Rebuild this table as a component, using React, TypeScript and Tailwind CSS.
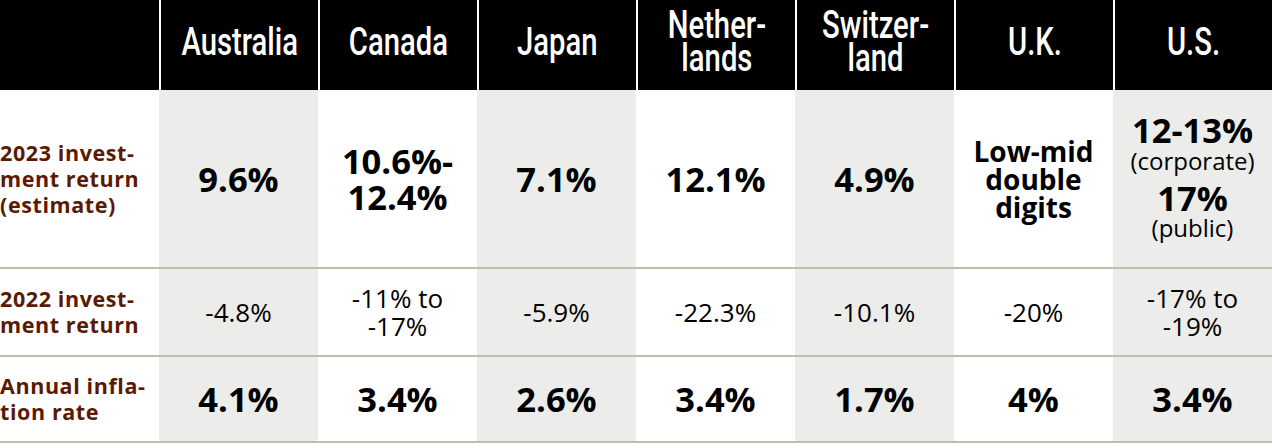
const countries: string[][] = [
  ["Australia"],
  ["Canada"],
  ["Japan"],
  ["Nether-", "lands"],
  ["Switzer-", "land"],
  ["U.K."],
  ["U.S."],
];

const returns2022: string[][] = [
  ["-4.8%"],
  ["-11% to", "-17%"],
  ["-5.9%"],
  ["-22.3%"],
  ["-10.1%"],
  ["-20%"],
  ["-17% to", "-19%"],
];

const inflation = ["4.1%", "3.4%", "2.6%", "3.4%", "1.7%", "4%", "3.4%"];

const shade = (i: number) => (i % 2 === 0 ? "bg-[#ececea]" : "bg-white");

function Label({ lines }: { lines: string[] }) {
  return (
    <div className="flex items-center text-[21.5px] font-bold leading-[26px] tracking-[0.6px] text-[#5a1a02]">
      <div>
        {lines.map((l) => (
          <div key={l}>{l}</div>
        ))}
      </div>
    </div>
  );
}

function Big({ children }: { children: React.ReactNode }) {
  return <div className="text-[34.5px] font-bold leading-[36px] text-black">{children}</div>;
}

export default function App() {
  const row1: React.ReactNode[] = [
    <Big>9.6%</Big>,
    <Big>
      10.6%-
      <br />
      12.4%
    </Big>,
    <Big>7.1%</Big>,
    <Big>12.1%</Big>,
    <Big>4.9%</Big>,
    <div className="text-[28px] font-bold leading-[28px] text-black">
      Low-mid
      <br />
      double
      <br />
      digits
    </div>,
    <div className="text-black -mt-[4px]">
      <div className="text-[34.5px] font-bold leading-[34px]">12-13%</div>
      <div className="text-[24px] leading-[28px]">(corporate)</div>
      <div className="mt-[6px] text-[34.5px] font-bold leading-[34px]">17%</div>
      <div className="text-[24px] leading-[26px]">(public)</div>
    </div>,
  ];

  return (
    <div className="w-[1272px] h-[448px] bg-white font-['Open_Sans',sans-serif]">
      <div className="grid grid-cols-[159px_repeat(7,159px)]">
        {/* header */}
        <div className="h-[90px] bg-black" />
        {countries.map((c) => (
          <div
            key={c[0]}
            className="h-[90px] bg-black border-l-2 border-white flex items-center justify-center text-white"
          >
            <div className="scale-x-[0.77] text-center font-['Roboto',sans-serif] text-[38px] font-medium leading-[33px] -mt-[6px]">
              {c.map((l) => (
                <div key={l}>{l}</div>
              ))}
            </div>
          </div>
        ))}

        {/* 2023 return */}
        <div className="h-[179px] border-b-2 border-[#c3bcae] flex">
          <Label lines={["2023 invest-", "ment return", "(estimate)"]} />
        </div>
        {row1.map((cell, i) => (
          <div
            key={i}
            className={`h-[179px] border-b-2 border-[#c3bcae] flex items-center justify-center text-center ${shade(i)}`}
          >
            {cell}
          </div>
        ))}

        {/* 2022 return */}
        <div className="h-[88px] border-b-2 border-[#c3bcae] flex">
          <Label lines={["2022 invest-", "ment return"]} />
        </div>
        {returns2022.map((v, i) => (
          <div
            key={i}
            className={`h-[88px] border-b-2 border-[#c3bcae] flex items-center justify-center text-center text-[26px] leading-[28px] text-black ${shade(i)}`}
          >
            <div>
              {v.map((l) => (
                <div key={l}>{l}</div>
              ))}
            </div>
          </div>
        ))}

        {/* inflation */}
        <div className="h-[86px] border-b-2 border-[#c3bcae] flex">
          <Label lines={["Annual infla-", "tion rate"]} />
        </div>
        {inflation.map((v, i) => (
          <div
            key={i}
            className={`h-[86px] border-b-2 border-[#c3bcae] flex items-center justify-center ${shade(i)}`}
          >
            <Big>{v}</Big>
          </div>
        ))}
      </div>
    </div>
  );
}
